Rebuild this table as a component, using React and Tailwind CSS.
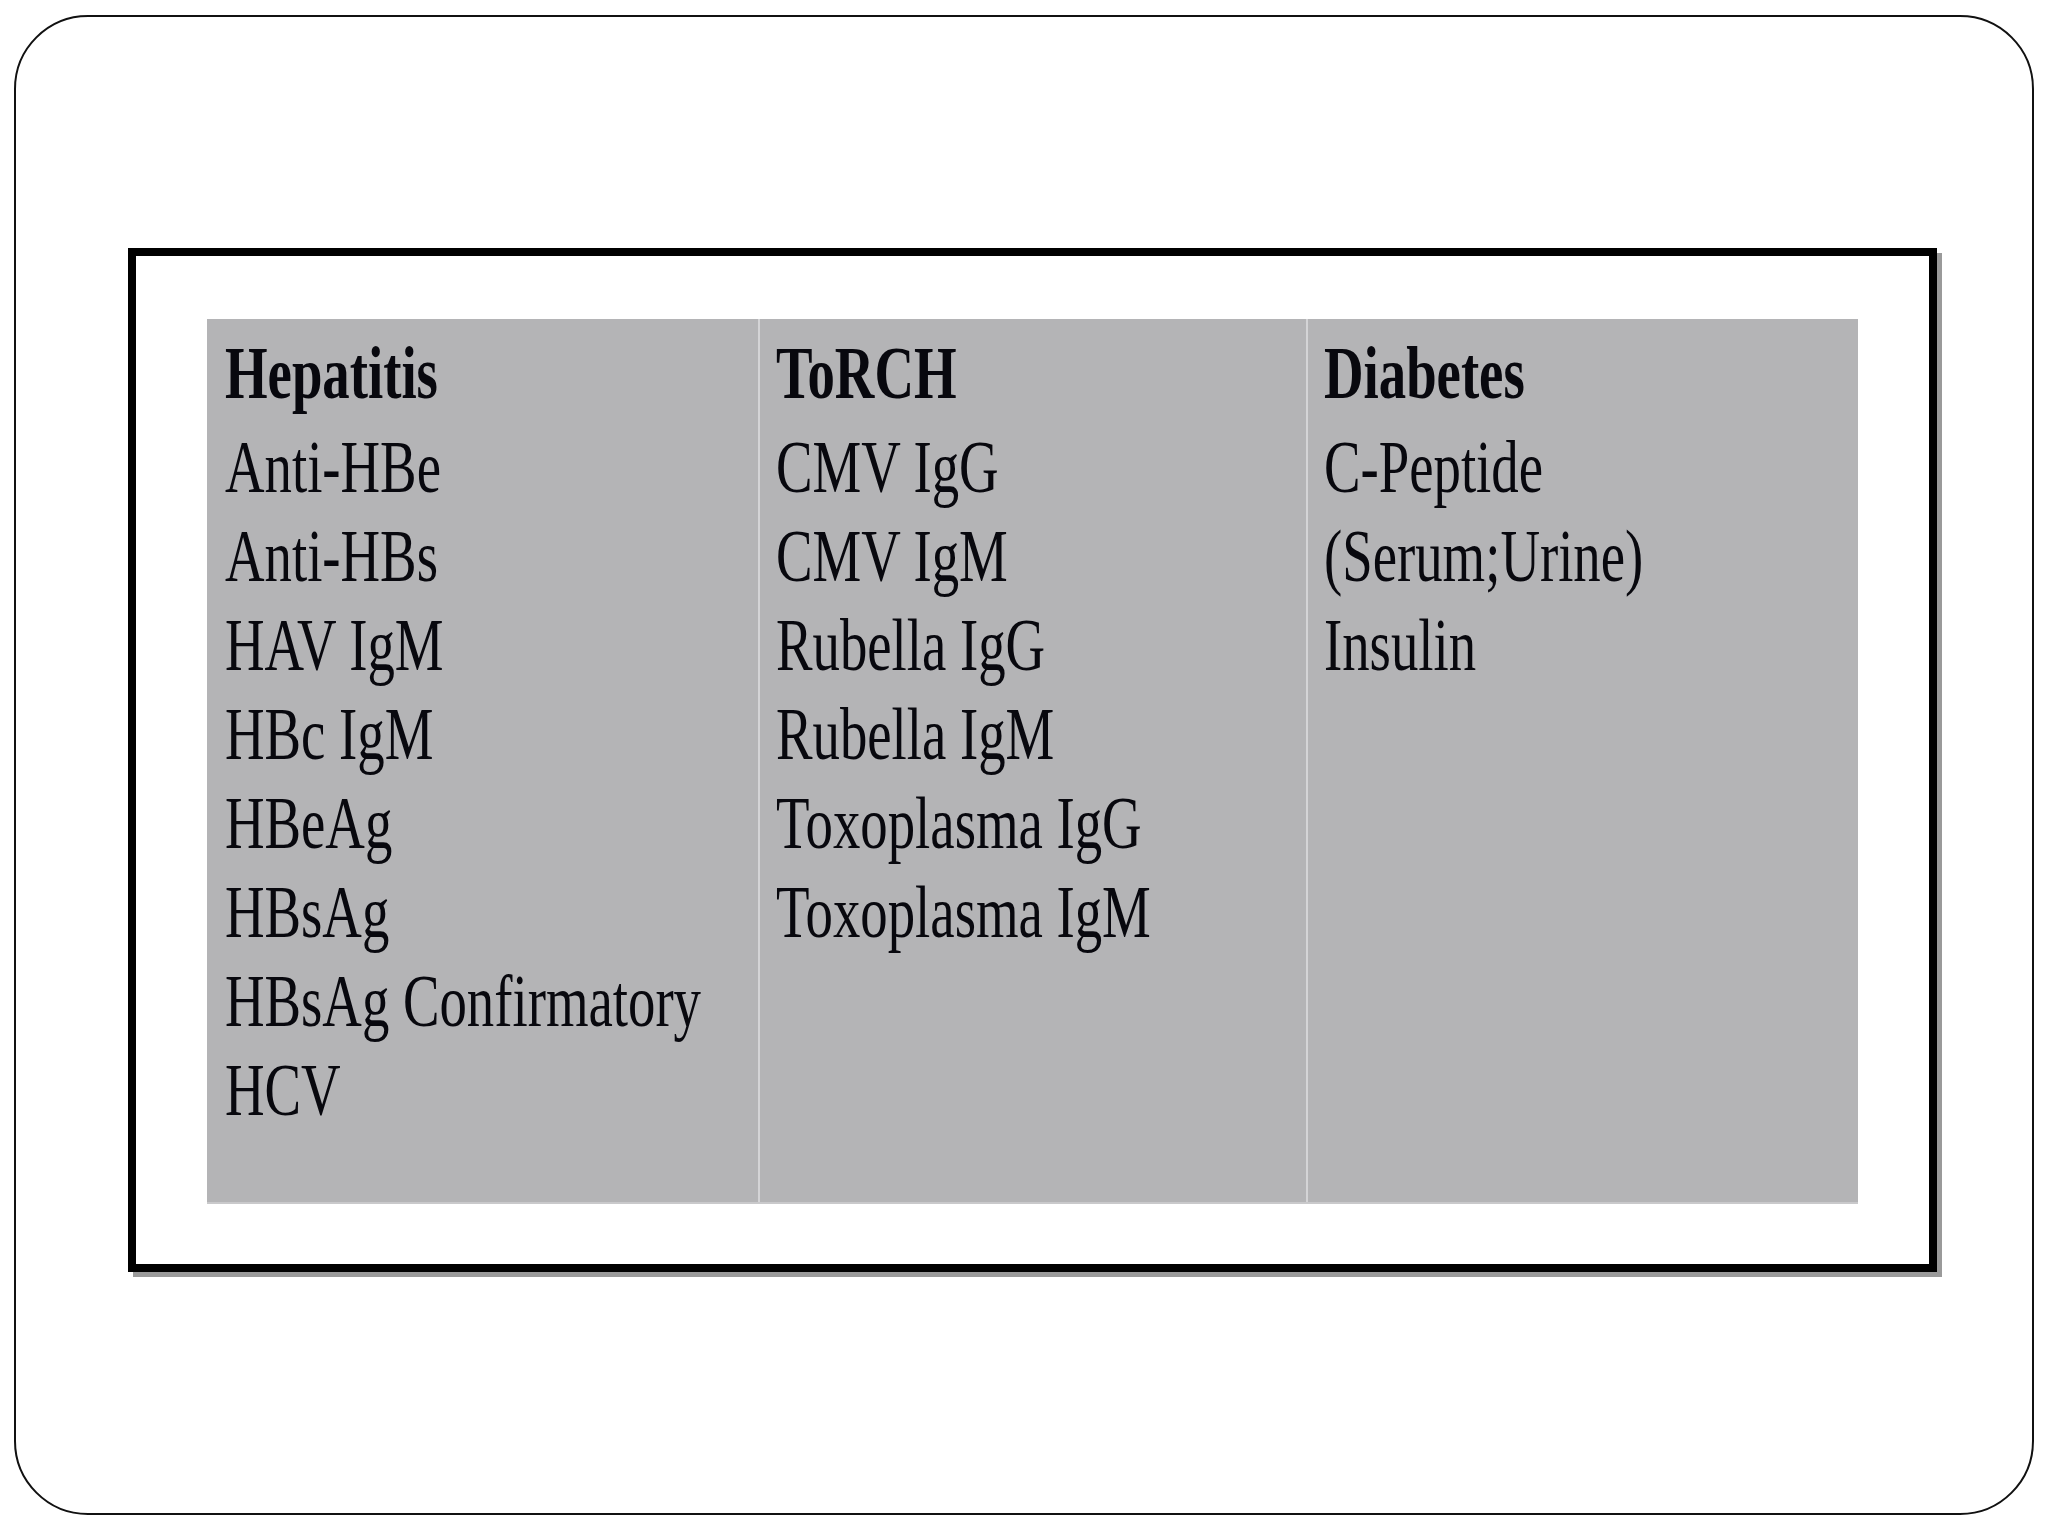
import React from "react";

const columns = [
  {
    title: "Hepatitis",
    items: [
      "Anti-HBe",
      "Anti-HBs",
      "HAV IgM",
      "HBc IgM",
      "HBeAg",
      "HBsAg",
      "HBsAg Confirmatory",
      "HCV",
    ],
  },
  {
    title: "ToRCH",
    items: [
      "CMV IgG",
      "CMV IgM",
      "Rubella IgG",
      "Rubella IgM",
      "Toxoplasma IgG",
      "Toxoplasma IgM",
    ],
  },
  {
    title: "Diabetes",
    items: ["C-Peptide", "(Serum;Urine)", "Insulin"],
  },
];

const TestColumn = ({ title, items, first }) => {
  return (
    <div
      className={
        first
          ? "pl-[18px] pt-[5px]"
          : "pl-[16px] pt-[5px] border-l-2 border-[#d4d4d6]"
      }
    >
      {/* text in the slide is squeezed sideways */}
      <div className="origin-left scale-x-[0.73] whitespace-nowrap text-[75px] text-[#08080e]">
        <div className="font-bold leading-[98px]">{title}</div>
        {items.map((item) => (
          <div key={item} className="leading-[89px]">
            {item}
          </div>
        ))}
      </div>
    </div>
  );
};

const App = () => {
  return (
    <div
      className="w-[2048px] h-[1536px] bg-white pl-[14px] pt-[15px]"
      style={{ fontFamily: '"Liberation Serif", "Times New Roman", serif' }}
    >
      {/* slide frame */}
      <div className="w-[2020px] h-[1500px] rounded-[74px] border-2 border-[#111] pl-[112px] pt-[231px]">
        {/* black bordered panel */}
        <div className="w-[1809px] h-[1024px] border-[8px] border-black bg-white shadow-[5px_5px_0_#9a9a9a] pl-[71px] pt-[63px]">
          {/* grey table */}
          <div className="w-[1651px] h-[885px] bg-[#b4b4b6] border-b-2 border-[#c9c9cb] grid grid-cols-[551px_548px_1fr]">
            {columns.map((col, i) => (
              <TestColumn key={col.title} title={col.title} items={col.items} first={i === 0} />
            ))}
          </div>
        </div>
      </div>
    </div>
  );
};

export default App;
